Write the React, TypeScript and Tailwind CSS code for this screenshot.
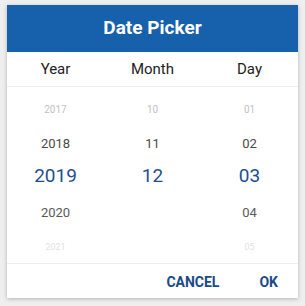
import React from "react";

const rowHeights = ["h-[44px]", "h-[26px]", "h-[38px]", "h-[36px]", "h-[33px]"];

const styles = [
  "text-[10px] text-[#c2c2c2]",
  "text-[13px] text-[#4a4a4a]",
  "text-[19px] text-[#1d4f90]",
  "text-[13px] text-[#5a5a5a]",
  "text-[9px] text-[#e2e2e2]",
];

const columns: string[][] = [
  ["2017", "2018", "2019", "2020", "2021"],
  ["10", "11", "12", "", ""],
  ["01", "02", "03", "04", "05"],
];

export default function App() {
  return (
    <div
      className="w-[305px] h-[306px] bg-[#efefef] pl-[7px] pt-[5px]"
      style={{ fontFamily: "Roboto, 'Noto Sans', sans-serif" }}
    >
      <div className="w-[291px] h-[293px] bg-white shadow-[0_1px_4px_rgba(0,0,0,0.25)] flex flex-col">
        <div className="h-[47px] bg-[#1760ab] flex items-center justify-center text-white text-[19px] font-bold">
          Date Picker
        </div>

        <div className="h-[35px] grid grid-cols-3 items-center text-center text-[15px] text-[#222] border-b border-[#eeeeee]">
          <div>Year</div>
          <div>Month</div>
          <div>Day</div>
        </div>

        <div className="h-[177px] grid grid-cols-3 border-b border-[#eeeeee]">
          {columns.map((col, ci) => (
            <div key={ci} className="flex flex-col">
              {col.map((text, ri) => (
                <div
                  key={ri}
                  className={`${rowHeights[ri]} flex items-center justify-center ${styles[ri]}`}
                >
                  {text}
                </div>
              ))}
            </div>
          ))}
        </div>

        <div className="flex-1 flex items-center justify-end pr-[20px] pt-[2px] gap-[40px] text-[14px] font-bold text-[#1b4a88]">
          <button>CANCEL</button>
          <button>OK</button>
        </div>
      </div>
    </div>
  );
}
